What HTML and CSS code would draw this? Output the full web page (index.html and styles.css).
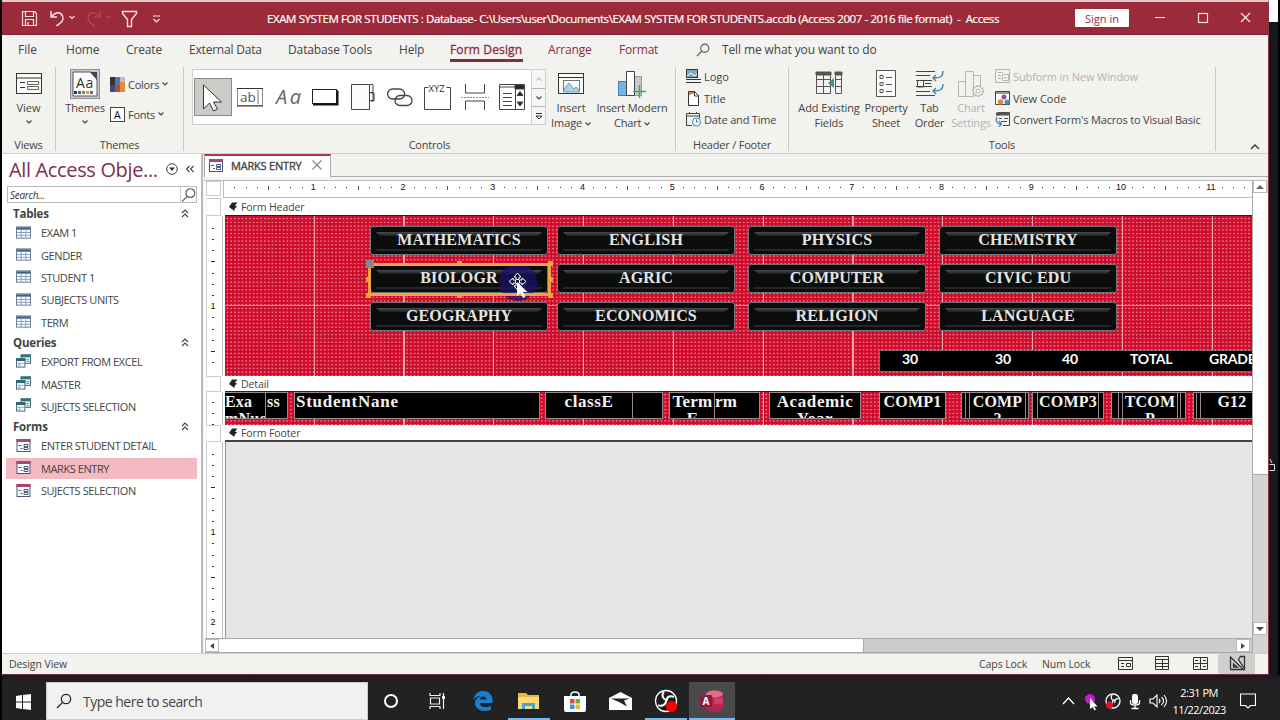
FILE: index.html
```html
<!DOCTYPE html>
<html lang="en">
<head>
    <meta charset="UTF-8">
    <title>EXAM SYSTEM FOR STUDENTS - Access</title>
    <link rel="stylesheet" href="styles.css">
</head>
<body>
<!-- shared icons -->
<svg class="defs">
    <symbol id="i-table" viewBox="0 0 16 13"><rect x=".5" y=".5" width="15" height="12" fill="#fff" stroke="#5f7893"/><path d="M1 1h14v2.5H1z" fill="#3f5f86"/><path d="M5.5 3v10M10.500 3v10M1 6.500h14M1 9.500h14" stroke="#7f9dbb" fill="none"/></symbol>
    <symbol id="i-query" viewBox="0 0 16 15"><rect x="5.500" y=".5" width="10" height="9" fill="#e9f2f5" stroke="#44686e"/><path d="M5 0h11v3H5z" fill="#2f7476"/><rect x=".5" y="4.500" width="9" height="9" fill="#f2f7fa" stroke="#44647a"/><path d="M0 4h10v3H0z" fill="#2d6673"/><path d="M2 9.500h3M6 9.500h2M2 11.500h3M11 5.500h3M11 7.500h3" stroke="#6f92a8"/></symbol>
    <symbol id="i-form" viewBox="0 0 14 13"><rect x=".5" y=".5" width="13" height="12" fill="#fff" stroke="#4c567c"/><path d="M0 0h14v3H0z" fill="#a8476f"/><path d="M2 6.500h3M4 9.500h2M7.500 5.500h4v2h-4zM7.500 8.500h4v2h-4z" stroke="#4a5a8b" fill="none"/></symbol>
    <symbol id="i-up2" viewBox="0 0 8 9"><path d="M1 4l3-3 3 3M1 8l3-3 3 3" stroke="#444" fill="none" stroke-width="1.100"/></symbol>
    <symbol id="i-down" viewBox="0 0 6 4"><path d="M.5.5L3 3 5.500.5" stroke="currentColor" fill="none" stroke-width="1.100"/></symbol>
    <symbol id="i-search" viewBox="0 0 16 16"><circle cx="10" cy="6" r="4.700" fill="none" stroke="currentColor" stroke-width="1.200"/><path d="M6.600 9.400L1 15" stroke="currentColor" stroke-width="1.300"/></symbol>
    <symbol id="i-arrow" viewBox="0 0 9 9"><path d="M3 .5h5.500L6 3.500 8.500 5C6.500 5 5.500 6 5.500 9L0 5z" fill="#222"/></symbol>
</svg>

<div class="screen">
    <div class="window">
        <header class="titlebar">
            <div class="quick">
                <svg width="140" height="24" viewBox="0 0 140 24" fill="none" stroke="#ffdfe4" stroke-width="1.200">
                    <path d="M1.500 5.500h12l2 2v12h-14zM4.500 5.500v5h8v-5M4.500 19.500v-6h8v6M7 16v3"/>
                    <path d="M30 5v6h6M30.500 11c3-5 9-6 11-1s-2 7-6 10" stroke-width="1.500"/>
                    <path d="M48.500 10l2.500 2.500 2.500-2.500"/>
                    <path d="M79 5v6h-6M78.500 11c-3-5-9-6-11-1s2 7 6 10M85.500 10l2 2 2-2" stroke="#b4505d"/>
                    <path d="M101.500 5.500h14v2l-5 6v7h-4v-7l-5-6z" stroke-width="1.400"/>
                    <path d="M132 10h7M132.500 13l3 3 3-3"/>
                </svg>
            </div>
            <div class="title">EXAM SYSTEM FOR STUDENTS : Database- C:\Users\user\Documents\EXAM SYSTEM FOR STUDENTS.accdb (Access 2007 - 2016 file format)&nbsp; -&nbsp; Access</div>
            <button class="signin">Sign in</button>
            <svg class="winbtns" width="110" height="12" viewBox="0 0 110 12" stroke="#ffe6ea" fill="none" stroke-width="1.200"><path d="M6 5.500h10M92 1l9 9M101 1l-9 9"/><rect x="49.500" y="1.500" width="9" height="9"/></svg>
        </header>

        <nav class="tabs">
            <span class="t-file">File</span><span class="t-home">Home</span><span class="t-create">Create</span><span class="t-ext">External Data</span><span class="t-db">Database Tools</span><span class="t-help">Help</span><span class="t-design active">Form Design</span><span class="t-arr red">Arrange</span><span class="t-fmt red">Format</span>
            <svg width="14" height="14" color="#555"><use href="#i-search"/></svg><span class="t-tell">Tell me what you want to do</span>
        </nav>

        <div class="ribbon">
            <section class="group g-views">
                <div class="body">
                    <div class="big">
                        <svg width="28" height="30" viewBox="0 0 28 30" fill="none" stroke="#333"><rect x="1.500" y="4.500" width="25" height="20" fill="#fbfbf9"/><path d="M1 9h26M5 13.500h5M5 18.500h5"/><path d="M12.500 12.500h11v3h-11zM12.500 17.500h11v3h-11z" stroke="#666"/></svg>
                        <span>View</span><svg class="chev" width="6" height="4"><use href="#i-down"/></svg>
                    </div>
                </div>
                <h4>Views</h4>
            </section>
            <section class="group g-themes">
                <div class="body">
                    <div class="big">
                        <svg width="30" height="30" viewBox="0 0 30 30"><rect x=".5" y=".5" width="29" height="29" fill="#c5cad2" stroke="#8a929e"/><path d="M3 3h18l6 7v17H3z" fill="#fff" stroke="#555"/><path d="M20 3h7v8z" fill="#3c4653"/><text x="6" y="19" font-size="14" font-family="Open Sans" fill="#333" textLength="17">Aa</text><path d="M4 23.500h3" stroke="#333" stroke-width="3"/><path d="M8 23.500h3" stroke="#47648a" stroke-width="3"/><path d="M12 23.500h3" stroke="#62975a" stroke-width="3"/><path d="M16 23.500h3" stroke="#d1a23b" stroke-width="3"/><path d="M20 23.500h3" stroke="#705c95" stroke-width="3"/></svg>
                        <span>Themes</span><svg class="chev" width="6" height="4"><use href="#i-down"/></svg>
                    </div>
                    <div class="stack">
                        <div><svg width="15" height="15"><path d="M0 0h5v8H0z" fill="#333"/><path d="M5 0h5v8H5z" fill="#5677a5"/><path d="M10 0h5v5h-5z" fill="#b4c0ca"/><path d="M0 8h5v7H0z" fill="#344f87"/><path d="M5 8h5v7H5z" fill="#b84d26"/><path d="M10 5h5v10h-5z" fill="#e48a42"/></svg><span class="lbl-colors">Colors</span> <svg class="chev" width="6" height="4"><use href="#i-down"/></svg></div>
                        <div><svg width="15" height="15"><rect x=".5" y=".5" width="14" height="14" fill="#fff" stroke="#444"/><text x="4" y="11.500" font-family="Open Sans" font-size="10.500">A</text></svg><span class="lbl-fonts">Fonts</span> <svg class="chev" width="6" height="4"><use href="#i-down"/></svg></div>
                    </div>
                </div>
                <h4>Themes</h4>
            </section>
            <section class="group g-controls">
                <div class="body">
                    <div class="gallery">
                        <div class="tools">
                            <div class="tool picked"><svg width="37" height="37" viewBox="0 0 37 37"><path d="M8.500 6v24l6-6 4 8 4-2-4-7h8z" fill="#fff" stroke="#333"/></svg></div>
                            <svg width="298" height="30" viewBox="3 0 298 30" fill="none" stroke="#444">
                                <rect x="4.500" y="6.500" width="25" height="17" stroke="#888"/><path d="M4 24h26M4 6.500h26" stroke="#333"/><text x="7" y="20" font-family="Open Sans" font-size="13.500" fill="#555" stroke="none">ab</text><path d="M25 8v14" stroke="#777"/>
                                <text x="43" y="22" font-family="Open Sans" font-style="italic" font-size="20" fill="#666" stroke="none" textLength="25">Aa</text>
                                <rect x="79.500" y="7.500" width="24" height="14" stroke="#222"/><path d="M80 22.500h24.500v-14" stroke="#111" stroke-width="2"/>
                                <path d="M118.500 2.500h18v25h-18zM137 2.500h3v8h-3M140 10.500v8h-3" fill="#fbfbfb"/><path d="M138 11h3v8h-3" stroke="#333"/>
                                <rect x="154.600" y="7" width="17" height="10" rx="5" stroke-width="1.300"/><rect x="162" y="13.500" width="17" height="10" rx="5" stroke-width="1.300"/>
                                <path d="M191.500 5.500v22h26v-22M191.500 5.500h4M213.500 5.500h4"/><text x="195.500" y="10" font-family="Open Sans" font-size="9.500" fill="#333" stroke="none">XYZ</text>
                                <path d="M232.500 2v9h19v-9M232.500 28v-9h19v9"/><path d="M228 15.500h28" stroke="#5d9bb0" stroke-dasharray="2 1"/>
                                <path d="M266.500 2.500h25v25h-25z"/><path d="M266 5h17M270 11.500h9M270 15.500h9M270 19.500h9M270 23.500h9M282.500 3v25" /><path d="M282 3h9v4h-9zM284 13.500l3-4 3 4zM284 20l3 4 3-4z" fill="#222"/>
                            </svg>
                        </div>
                        <div class="spin"><i><svg width="6" height="4" color="#bbb" class="flip"><use href="#i-down"/></svg></i><i><svg width="6" height="4"><use href="#i-down"/></svg></i><i><svg width="8" height="8" viewBox="0 0 8 8" fill="none" stroke="#333"><path d="M1 1.500h6M1 4l3 3 3-3z"/></svg></i></div>
                    </div>
                    <div class="big img">
                        <svg width="28" height="30" viewBox="0 0 28 30" fill="none" stroke="#333"><rect x="1.500" y="4.500" width="25" height="20" fill="#fbfbf9"/><path d="M1 8.500h26"/><rect x="6.500" y="11.500" width="16" height="11" stroke="#777"/><path d="M7 20l5-6 5 6 2-2 3 3v2H7z" fill="#acd0e3" stroke="#6c9eb8"/></svg>
                        <span>Insert<br>Image <svg class="chev" width="6" height="4"><use href="#i-down"/></svg></span>
                    </div>
                    <div class="big chart">
                        <svg width="32" height="30" viewBox="1 0 32 30" fill="none" stroke="#444"><rect x="3.500" y="12.500" width="8" height="14" fill="#76b4df" stroke="#3c7fb0"/><path d="M19.500 7.500h7v19h-7z" fill="#c9c9c9" stroke="#999"/><path d="M11.500 2.500h8v24h-8z" fill="#fff"/><path d="M24.500 16v13M18 22.500h13" stroke="#45a557" stroke-width="1.500"/></svg>
                        <span>Insert Modern<br>Chart <svg class="chev" width="6" height="4"><use href="#i-down"/></svg></span>
                    </div>
                </div>
                <h4>Controls</h4>
            </section>
            <section class="group g-hf">
                <div class="body">
                    <div class="stack three">
                        <div><svg width="15" height="15" fill="none"><rect x=".5" y=".5" width="11" height="8" fill="#7fa9c0" stroke="#333"/><path d="M1 7l4-3 3 3 3-2" stroke="#fff"/><path d="M0 10.500h15M0 13.500h15" stroke="#333"/></svg>Logo</div>
                        <div><svg width="15" height="15" fill="none"><path d="M2.500.5h6l4 4v10h-10z" fill="#fff" stroke="#333"/><path d="M8.500 1v4h4" stroke="#333"/><path d="M4 1v3M4 2h4" stroke="#d98b3f" stroke-width="2"/></svg>Title</div>
                        <div class="date"><svg width="15" height="15" fill="none"><path d="M13.500 6V1.500h-13v12H6M0 4h14M3.500 0v2M10.500 0v2" stroke="#444"/><circle cx="10.500" cy="10" r="4" fill="#fff" stroke="#3b83ac"/><path d="M10.500 7.500V10h2" stroke="#3b83ac"/></svg>Date and Time</div>
                    </div>
                </div>
                <h4>Header / Footer</h4>
            </section>
            <section class="group g-tools">
                <div class="body">
                    <div class="big w68"><svg width="28" height="30" viewBox="0 0 28 30" fill="none" stroke="#555"><path d="M1.500 3.500h14v21h-14zM1.500 10.500h14M1.500 17.500h14M8.500 4v21M20.500 3.500h6v21h-6zM20 10.500h7M20 17.500h7"/><path d="M1 3h15v3H1zM20 3h7v3h-7z" fill="#555"/><path d="M19 9v10l-6-5z" fill="#4f8694" stroke="none"/></svg><span>Add Existing<br>Fields</span></div>
                    <div class="big w46"><svg width="22" height="30" viewBox="0 0 22 30" fill="none" stroke="#555"><path d="M1.500 1.500h19v26h-19z" fill="#fdfdfb"/><path d="M5 6.500h3v3H5zM5 13.500h3v3H5zM5 20.500h3v3H5zM11 8.500h6M11 15.500h6M11 22.500h6"/></svg><span>Property<br>Sheet</span></div>
                    <div class="big w41"><svg width="28" height="30" viewBox="0 0 28 30" fill="none" stroke="#444"><path d="M0 2.500h19M0 6.500h14M0 11.500h16M0 17.500h16M0 22.500h14M0 26.500h19M1.500 11v7h6v-7M9 14.500h6"/><path d="M27 2c0 6-3 7-10 7M20 6l-3 3 3 3M27 15c0 6-3 7-10 7M20 19l-3 3 3 3" stroke="#3c84ad" stroke-width="1.300"/></svg><span>Tab<br>Order</span></div>
                    <div class="big w39 off"><svg width="28" height="30" viewBox="0 0 28 30" fill="none" stroke="#b5b5b2"><path d="M1.500 12.500h7v15h-7zM8.500 2.500h8v25h-8zM16.500 6.500h7v11"/><circle cx="21" cy="22" r="5" fill="#f2f2ee" stroke-width="2" stroke-dasharray="2 1"/><circle cx="21" cy="22" r="2"/></svg><span>Chart<br>Settings</span></div>
                    <div class="stack three last">
                        <div class="off"><svg width="15" height="15" fill="none" stroke="#b5b5b2"><path d="M.5.5h14v13H.5zM3 3.500h5M3 6.500h3M3 9.500h3M7.500 5.500h6v6h-6zM9 8.500h3"/></svg>Subform in New Window</div>
                        <div><svg width="15" height="15" fill="none"><path d="M.5.5h14v13H.5z" fill="#fff" stroke="#444"/><path d="M0 2h15" stroke="#333"/><circle cx="9" cy="6" r="2.500" fill="#8a4c9f"/><circle cx="5.500" cy="11" r="2.800" fill="#e0893b"/><circle cx="12" cy="11" r="2.600" fill="#4b91c3"/></svg>View Code</div>
                        <div class="convert"><svg width="15" height="15" fill="none"><path d="M3 4V.5h11.500v13H8" stroke="#444"/><path d="M1 2h14" stroke="#555" stroke-width="3"/><path d="M4 6.500h3M9 6.500h4M6 9.500h6" stroke="#555"/><path d="M2 5c-2 4 0 7 4 7M4 9l2.500 3L4 15" stroke="#3e82b8" stroke-width="1.300"/></svg>Convert Form's Macros to Visual Basic</div>
                    </div>
                </div>
                <h4>Tools</h4>
            </section>
            <svg class="collapse" width="10" height="6" fill="none" stroke="#333" stroke-width="1.300"><path d="M1 5l4-4 4 4"/></svg>
        </div>

        <main class="work">
            <aside class="navpane">
                <div class="navhead">
                    <h2>All Access Obje...</h2>
                    <svg width="12" height="12" viewBox="0 0 12 12"><circle cx="6" cy="6" r="5.300" fill="#fff" stroke="#444"/><path d="M3 4.500h6L6 8z" fill="#333"/></svg>
                    <svg width="8" height="8" viewBox="0 0 8 8" fill="none" stroke="#444" stroke-width="1.100"><path d="M3.500 1l-3 3 3 3M7.500 1l-3 3 3 3"/></svg>
                </div>
                <div class="navsearch"><em>Search...</em><svg width="16" height="16" color="#555"><use href="#i-search"/></svg></div>
                <h3>Tables <svg width="8" height="9"><use href="#i-up2"/></svg></h3>
                <ul>
                    <li><svg width="15" height="13"><use href="#i-table"/></svg>EXAM 1</li>
                    <li><svg width="15" height="13"><use href="#i-table"/></svg>GENDER</li>
                    <li><svg width="15" height="13"><use href="#i-table"/></svg>STUDENT 1</li>
                    <li><svg width="15" height="13"><use href="#i-table"/></svg>SUBJECTS UNITS</li>
                    <li><svg width="15" height="13"><use href="#i-table"/></svg>TERM</li>
                </ul>
                <h3>Queries <svg width="8" height="9"><use href="#i-up2"/></svg></h3>
                <ul>
                    <li><svg width="15" height="15"><use href="#i-query"/></svg>EXPORT FROM EXCEL</li>
                    <li><svg width="15" height="15"><use href="#i-query"/></svg>MASTER</li>
                    <li><svg width="15" height="15"><use href="#i-query"/></svg>SUJECTS SELECTION</li>
                </ul>
                <h3>Forms <svg width="8" height="9"><use href="#i-up2"/></svg></h3>
                <ul>
                    <li><svg width="15" height="13"><use href="#i-form"/></svg>ENTER STUDENT DETAIL</li>
                    <li class="current"><svg width="15" height="13"><use href="#i-form"/></svg>MARKS ENTRY</li>
                    <li><svg width="15" height="13"><use href="#i-form"/></svg>SUJECTS SELECTION</li>
                </ul>
            </aside>

            <section class="document">
                <div class="doctabs">
                    <div class="doctab"><svg width="14" height="13"><use href="#i-form"/></svg><b>MARKS ENTRY</b><svg width="10" height="10" stroke="#888" stroke-width="1.200"><path d="M.5.5l9 9M9.500.5l-9 9"/></svg></div>
                </div>
                <div class="designer">
                    <div class="canvas">
                        <div class="hrule"><div class="corner"></div><div class="marks" data-count="91"></div></div>

                        <div class="bar b-header"><i></i><span><svg width="9" height="9"><use href="#i-arrow"/></svg>Form Header</span></div>
                        <div class="sect s-header">
                            <div class="vrule" data-count="13"></div>
                            <div class="grid">
                                <div class="inch"></div>
                                <div class="btn c1 r1">MATHEMATICS</div><div class="btn c2 r1">ENGLISH</div><div class="btn c3 r1">PHYSICS</div><div class="btn c4 r1">CHEMISTRY</div>
                                <div class="btn c1 r2">BIOLOGR</div><div class="btn c2 r2">AGRIC</div><div class="btn c3 r2">COMPUTER</div><div class="btn c4 r2">CIVIC EDU</div>
                                <div class="btn c1 r3">GEOGRAPHY</div><div class="btn c2 r3">ECONOMICS</div><div class="btn c3 r3">RELIGION</div><div class="btn c4 r3">LANGUAGE</div>
                                <div class="spot"></div>
                                <div class="selection"><i class="move"></i><i class="n"></i><i class="ne"></i><i class="w"></i><i class="e"></i><i class="sw"></i><i class="s"></i><i class="se"></i></div>
                                <svg class="pointer" width="22" height="28" viewBox="0 0 22 28"><path d="M9.500 1L13 5h-2v2.500h-3V5H6zM1 9.500L5 6v2h2.500v3H5v2zM18 9.500L14 6v2h-2.500v3H14v2zM9.500 18L6 14h2v-2.500h3V14h2z" fill="#0b0b35" stroke="#fff"/><path d="M9 10v14l3.500-3 2.500 5 2.500-1-2.500-5h4.500z" fill="#fff"/></svg>
                                <div class="totals"><span>30</span><span>30</span><span>40</span><span>TOTAL</span><span>GRADE</span></div>
                            </div>
                        </div>

                        <div class="bar b-detail"><i></i><span><svg width="9" height="9"><use href="#i-arrow"/></svg>Detail</span></div>
                        <div class="sect s-detail">
                            <div class="vrule" data-count="3"></div>
                            <div class="grid">
                                <div class="inch"></div>
                                <div class="field f-exam">Exa<br>mNuo</div><div class="field f-ss">ss</div>
                                <div class="field f-name">StudentNane</div>
                                <div class="field f-class">classE</div><div class="field f-class2"></div>
                                <div class="field f-term">Term<br>E</div><div class="field f-term2">rm</div>
                                <div class="field f-year">Academic<br>Year</div>
                                <div class="field f-c1">COMP1</div>
                                <div class="field f-c2a"></div><div class="field f-c2b"></div><div class="field f-c2">COMP<br>2</div>
                                <div class="field f-c3a"></div><div class="field f-c3">COMP3</div>
                                <div class="field f-ta"></div><div class="field f-tb"></div><div class="field f-t">TCOM<br>P</div>
                                <div class="field f-ga"></div><div class="field f-gb"></div><div class="field f-g">G12</div>
                            </div>
                        </div>

                        <div class="bar b-footer"><i></i><span><svg width="9" height="9"><use href="#i-arrow"/></svg>Form Footer</span></div>
                        <div class="sect s-empty"><div class="vrule" data-count="17"></div><div class="blank"></div></div>
                        <div class="hscroll"><i class="box left"></i><div class="thumb"></div><i class="box right"></i></div>
                    </div>
                    <div class="vscroll"><i class="box up"></i><div class="thumb"></div><i class="box down"></i></div>
                </div>
            </section>
        </main>

        <footer class="status">
            <span class="mode">Design View</span><span class="caps">Caps Lock</span><span class="num">Num Lock</span>
            <svg width="137" height="20" viewBox="0 0 137 20" fill="none" stroke="#333"><path d="M100 0h37v20h-37z" fill="#cfcfcd" stroke="none"/><path d="M.5 3.500h14v12H.5zM0 6.500h15M3 9.500h3M3 12.500h3M8.500 9.500h4v3h-4z"/><path d="M37.500 2.500h13v13h-13zM37 5.500h14M37 9.500h14M37 12.500h14M44.500 6v9"/><path d="M75.500 3.500h14v12h-14zM75 9.500h15M82.500 3v13M85 6.500h3M85 12.500h3M77 6.500h3M77 12.500h3"/><path d="M112.500 3v12.500h13zM126.500 2.500h-4l-2 3 6 9zM115.500 10v3h4z" stroke-width="1.300"/></svg>
        </footer>
    </div>
    <div class="behind"><svg width="7" height="14" fill="none" stroke="#ddd"><path d="M1 1l2 4M.5 6.500h5v6h-5"/></svg></div>

    <div class="taskbar">
        <div class="start"><svg width="16" height="16" fill="#fff"><path d="M0 2l6-1v6.500H0zM7 1l8-1v7.500H7zM0 8.500h6V15l-6-1zM7 8.500h8V16l-8-1z"/></svg></div>
        <div class="search"><svg width="16" height="16" color="#222"><use href="#i-search"/></svg>Type here to search</div>
        <div class="apps">
            <div><svg width="16" height="16"><circle cx="8" cy="8" r="6" fill="none" stroke="#fff" stroke-width="2"/></svg></div>
            <div><svg width="16" height="16" fill="none" stroke="#eee" stroke-width="1.200"><path d="M1 0v2.500h10V0M1.500 5h9v6h-9zM1 16v-2.500h10V16M14.500 0v16"/><path d="M13 4.500h3" stroke-width="3"/></svg></div>
            <div><svg width="20" height="20" viewBox="0 0 20 20"><path d="M0 9C2 2 6 0 10 0c6 0 9.500 4 9.500 9v3H7c0 5 7 5 11 2.500v4C11 22 2 19 2 12 2 8 5 6 8 5 4 5 2 7 0 9zM7 8.500h6.500C13.500 4.500 7.500 4.500 7 8.500z" fill="#1a7fd0"/></svg></div>
            <div class="run"><svg width="21" height="18"><path d="M0 1h8l2 2h11v14H0z" fill="#e9b83b"/><path d="M0 5h21v12H0z" fill="#fadb78"/><path d="M4 17v-6h13v6h-3v-3H7v3z" fill="#4ba3cf"/></svg></div>
            <div><svg width="22" height="21"><path d="M7 6V4c0-4 8-4 8 0v2" stroke="#fff" stroke-width="1.500" fill="none"/><path d="M0 5h22v14q0 2-2 2H2q-2 0-2-2z" fill="#fff"/><path d="M6 8h4.500v4.500H6z" fill="#e04a32"/><path d="M11.500 8H16v4.500h-4.500z" fill="#6fab3a"/><path d="M6 13.500h4.500V18H6z" fill="#2d9ad8"/><path d="M11.500 13.500H16V18h-4.500z" fill="#f0b92e"/></svg></div>
            <div><svg width="23" height="18"><path d="M0 6L11.500 0 23 6v12H0z" fill="#fff"/><path d="M2 6.500h19l-6 2 3 6-7-4z" fill="#222"/></svg></div>
            <div class="run"><svg width="24" height="24" viewBox="0 0 24 24"><circle cx="12" cy="12" r="10.500" fill="#1b1b1b" stroke="#fff" stroke-width="1.300"/><path d="M10 3c-3 3-1 7 2 8M20 8c-4-2-8 0-7 4M4 16c3 2 8 0 8-4" fill="none" stroke="#fff" stroke-width="2"/><circle cx="17.500" cy="17.500" r="5.500" fill="#f00"/></svg></div>
            <div class="run on"><svg width="24" height="22" viewBox="0 0 24 22"><path d="M6 4v14c0 5 17 5 17 0V4z" fill="#b3274b"/><ellipse cx="14.500" cy="4" rx="8.500" ry="3.500" fill="#e66c8c"/><path d="M14 8h9v6h-9z" fill="#d14067"/><rect y="5" width="12" height="12" rx="1" fill="#8d1c37"/><text x="2.500" y="15" font-family="Open Sans" font-weight="700" font-size="10" fill="#fff">A</text></svg></div>
        </div>
        <div class="tray">
            <svg width="110" height="20" viewBox="0 0 110 20" fill="none" stroke="#fff" stroke-width="1.300"><path d="M1 13l5.500-6 5.500 6"/><circle cx="28" cy="8" r="4.500" fill="#c31fd1" stroke="#c31fd1" stroke-dasharray="2 1"/><path d="M28 7v11l2.500-2 2 3.500 1.500-1-2-3h3.500z" fill="#fff" stroke="none"/><circle cx="51" cy="10" r="7" fill="#222"/><path d="M50 4c-2 3 0 6 3 5M57 8c-3-1-5 1-4 4M46 13c2 1 5 0 5-4"/><circle cx="47.500" cy="14" r="3.500" fill="#e3122a" stroke="none"/><rect x="70" y="3" width="6" height="10" rx="2" fill="#fff" stroke="none"/><path d="M68.500 9v3q0 2 4.500 2t4.500-2V9M73 14v3.500M69.500 17.500h7"/><path d="M88 8h3l4-4v12l-4-4h-3zM97 8q2 2 0 4M99.500 6q4 4 0 8M102 4q5 6 0 12" stroke-width="1.100"/></svg>
            <div class="clock">2:31 PM<br>11/22/2023</div>
            <svg width="16" height="16" fill="none" stroke="#fff" stroke-width="1.200"><path d="M.5 1h15v11.500h-5L8 15l-2.500-2.500h-5z"/></svg>
        </div>
    </div>
</div>

<script>
    // ruler marks: a dot every 1/8 inch, a tick at the half, a number at the inch
    function fillRuler(el) {
        var html = '';
        for (var i = 1; i <= Number(el.dataset.count); i++) {
            if (i % 8 === 0) html += '<span>' + i / 8 + '</span>';
            else if (i % 4 === 0) html += '<span><i class="tick"></i></span>';
            else html += '<span><i class="dot"></i></span>';
        }
        el.innerHTML = html;
    }
    document.querySelectorAll('.marks, .vrule').forEach(fillRuler);
</script>
</body>
</html>
```
FILE: styles.css
```css
* {
    box-sizing: border-box;
}

body {
    margin: 0;
    background: #111;
    font-family: "Open Sans", sans-serif;
    font-size: 11px;
    color: #444;
    overflow: hidden;
}

h2, h3, h4, ul {
    margin: 0;
    padding: 0;
    list-style: none;
    font-weight: normal;
}

svg {
    flex: none;
    display: block;
}

.defs {
    display: none;
}

.screen {
    width: 1280px;
    height: 720px;
    display: grid;
    grid-template-columns: 1269px 11px;
    grid-template-rows: 675px 45px;
    background: #000;
}

.window {
    margin-left: 2px;
    border-top: 2px solid #dfc9cc;
    border-right: 1px solid #8a3446;
    border-bottom: 1px solid #6e2c45;
    background: #f2f2ee;
    display: flex;
    flex-direction: column;
}

.behind {
    background: linear-gradient(#fff 22px, #17181f 22px);
    border-right: 2px solid #000;
    padding-top: 458px;
}

/* title bar */
.titlebar {
    height: 33px;
    flex: none;
    background: #9b2a3a;
    border-bottom: 1px solid #7c2437;
    color: #fff;
    display: flex;
    align-items: center;
}

.quick {
    width: 265px;
    padding-left: 19px;
}

.title {
    width: 808px;
    font-size: 11.5px;
    letter-spacing: -0.4px;
    white-space: nowrap;
    -webkit-text-stroke: 0.2px;
}

.signin {
    width: 54px;
    height: 18px;
    padding: 0;
    border: 0;
    border-radius: 1px;
    background: #fff;
    color: #9b2a3a;
    font: 11px "Open Sans", sans-serif;
}

.winbtns {
    margin-left: 20px;
}

/* ribbon tabs */
.tabs {
    height: 32px;
    flex: none;
    display: flex;
    padding-top: 7px;
    font-size: 12px;
    line-height: 16px;
    white-space: nowrap;
}

.tabs span { flex: none; }
.tabs svg { margin: 1px 12px 0 0; }
.t-file { width: 48px; margin-left: 16px; }
.t-home { width: 60px; }
.t-create { width: 63px; }
.t-ext { width: 99px; }
.t-db { width: 111px; }
.t-help { width: 51px; }
.t-design { width: 73px; margin-right: 25px; }
.t-arr { width: 71px; }
.t-fmt { width: 77px; }
.t-ext { letter-spacing: -0.2px; }
.t-tell, .t-db { letter-spacing: -0.12px; }
.t-home, .t-create, .t-arr { letter-spacing: -0.15px; }
.t-help { letter-spacing: -0.2px; }
.t-fmt { letter-spacing: -0.2px; }

.tabs .red, .tabs .active {
    color: #8c2c42;
}

.tabs .active {
    height: 20px;
    border-bottom: 3px solid #832c40;
    letter-spacing: 0.15px;
    -webkit-text-stroke: 0.3px;
}

/* ribbon */
.ribbon {
    height: 87px;
    flex: none;
    display: flex;
    border-bottom: 1px solid #d2d2cf;
    line-height: 15px;
    white-space: nowrap;
}

.group {
    display: flex;
    flex-direction: column;
    height: 84px;
    border-right: 1px solid #cacac7;
}

.group .body {
    height: 71px;
    display: flex;
    padding-top: 2px;
}

.group h4 {
    text-align: center;
    line-height: 13px;
    font-size: 11px;
    letter-spacing: -0.2px;
}

.g-views { width: 54px; }
.g-themes { width: 128px; }
.g-controls { width: 492px; }
.g-hf { width: 113px; }
.g-tools { width: 427px; }

.big {
    display: flex;
    flex-direction: column;
    align-items: center;
    text-align: center;
    font-size: 11px;
}

.big span {
    margin-top: 1px;
}

.chev {
    display: inline-block;
    vertical-align: middle;
}

.big > .chev { margin-top: 5px; }
.g-views .big { width: 53px; }
.g-themes .big { width: 54px; margin-left: 2px; letter-spacing: -0.2px; }
.off { color: #b3b3b0; }
.img { width: 50px; letter-spacing: -0.1px; }
.chart { width: 72px; letter-spacing: -0.15px; }
.w68 { width: 80px; letter-spacing: -0.1px; }
.w46 { width: 34px; letter-spacing: -0.2px; }
.w41 { width: 53px; letter-spacing: -0.2px; }
.w39 { width: 30px; letter-spacing: -0.15px; }

.stack div {
    height: 30px;
    display: flex;
    align-items: center;
    gap: 3px;
}

.g-themes .stack { margin-left: -2px; }

.stack.three {
    padding-left: 10px;
    margin-top: -3px;
}

.stack.three.last { padding-left: 9px; }

.stack.three div {
    height: 21.500px;
    gap: 3px;
}

.lbl-colors, .lbl-fonts { letter-spacing: -0.25px; }
.date, .convert { letter-spacing: -0.18px; }
.last .off { letter-spacing: -0.1px; }

.gallery {
    width: 354px;
    height: 56px;
    margin-left: 8px;
    border: 1px solid #cfcfcd;
    background: #fff;
    display: flex;
    justify-content: space-between;
}

.tools {
    flex: none;
    display: flex;
    align-items: center;
    gap: 4px;
}

.picked {
    width: 38px;
    height: 38px;
    border: 1px solid #888;
    background: #cbcbc8;
    margin-left: 1px;
}

.spin {
    flex: none;
    width: 14px;
    margin-left: -3px;
    background: #f6f6f4;
    border-left: 1px solid #cfcfcd;
}

.spin i {
    height: 18px;
    display: flex;
    align-items: center;
    justify-content: center;
}

.spin i + i { border-top: 1px solid #b5b5b2; }
.flip { transform: scaleY(-1); }

.collapse {
    margin: 77px 0 0 34px;
}

/* navigation pane */
.work {
    flex: 1;
    min-height: 0;
    display: flex;
}

.navpane {
    width: 201px;
    background: #fff;
    border-right: 2px solid #bbb;
}

.navhead {
    height: 31px;
    display: flex;
    align-items: center;
    padding-left: 7px;
}

.navhead h2 {
    width: 157px;
    font-size: 20px;
    letter-spacing: -0.35px;
    color: #80304a;
    white-space: nowrap;
}

.navhead svg { margin-top: -2px; }
.navhead svg + svg { margin-left: 8px; }

.navsearch {
    width: 190px;
    height: 17px;
    margin: 1px 0 2px 5px;
    border: 1px solid #bbb;
    display: flex;
    align-items: center;
    justify-content: space-between;
    padding-left: 2px;
    font-size: 10px;
    letter-spacing: -0.3px;
    color: #333;
}

.navsearch svg { border-left: 1px solid #ccc; }

.navpane h3 {
    height: 17px;
    line-height: 17px;
    display: flex;
    align-items: center;
    justify-content: space-between;
    padding: 0 12px 0 11px;
    font-size: 11.5px;
    font-weight: 700;
    letter-spacing: -0.2px;
}

.navpane li {
    height: 22.400px;
    display: flex;
    align-items: center;
    gap: 10px;
    margin: 0 4px;
    padding-left: 10px;
    padding-bottom: 1px;
    font-size: 11px;
    letter-spacing: -0.42px;
    white-space: nowrap;
}

.navpane li svg { margin-top: -1px; }

.navpane .current {
    background: #f3bac1;
    height: 21px;
    margin-top: 0.5px;
    margin-bottom: 0.9px;
}

/* document */
.document {
    flex: 1;
    display: flex;
    flex-direction: column;
    padding-left: 1px;
}

.doctabs {
    height: 23px;
    flex: none;
    border-bottom: 1px solid #aaa;
}

.doctab {
    width: 127px;
    height: 23px;
    background: #fff;
    border-top: 2px solid #b43549;
    border-right: 1px solid #aaa;
    border-left: 1px solid #aaa;
    display: flex;
    align-items: center;
    gap: 8px;
    padding: 0 0 3px 4px;
    font-size: 11px;
    letter-spacing: -0.2px;
    white-space: nowrap;
}

.doctab b {
    font-weight: 400;
    -webkit-text-stroke: 0.35px;
}

.doctab svg:last-child { margin-left: 3px; }

.designer {
    flex: 1;
    min-height: 0;
    display: flex;
    background: #fff;
    border-top: 3px solid #f4f4f2;
}

.canvas {
    width: 1048px;
    overflow: hidden;
    display: flex;
    flex-direction: column;
}

.hrule {
    height: 18px;
    flex: none;
    display: flex;
    border-top: 1px solid #bbb;
}

.corner {
    width: 15px;
    height: 15px;
    margin-left: 2px;
    border: 1px solid #ccc;
    margin-right: 2px;
}

.marks {
    width: 1030px;
    padding-left: 5.200px;
    overflow: hidden;
    display: flex;
    border: solid #bbb;
    border-width: 0 0 1px 1px;
    font: 9px/13px "Liberation Sans", sans-serif;
    color: #111;
}

.marks span {
    flex: 0 0 11.220px;
    height: 13px;
    text-align: center;
    display: flex;
    align-items: center;
    justify-content: center;
}

.dot {
    width: 1px;
    height: 1px;
    background: #333;
}

.vrule .dot { width: 2px; }

.marks .tick {
    width: 1px;
    height: 4px;
    background: #555;
}

.bar {
    flex: none;
    display: flex;
}

.bar > i {
    width: 15px;
    margin: 0 4px 0 2px;
    border: 1px solid #ccc;
    border-left-color: #eee;
}

.bar span {
    flex: 1;
    display: flex;
    align-items: center;
    gap: 3px;
    padding-left: 4px;
    border-bottom: 1px solid #222;
    font-size: 10.500px;
    letter-spacing: -0.1px;
}

.b-header { height: 18px; }
.b-detail { height: 16px; }
.b-footer { height: 17px; }
.b-footer span { border-bottom: 2px solid #444; }

.sect {
    display: flex;
    flex: none;
}

.s-header { height: 160px; }
.s-detail { height: 33px; }
.s-empty { flex: 1; min-height: 0; }

.vrule {
    width: 17px;
    margin: 0 2px 0 2px;
    padding-top: 4.400px;
    border-right: 1px solid #bbb;
    border-left: 1px solid #ccc;
    overflow: hidden;
    font: 9px/11.220px "Liberation Sans", sans-serif;
    color: #111;
}

.s-header .vrule { padding-top: 6.600px; }
.s-empty .vrule { padding-top: 6.500px; }

.vrule span {
    height: 11.220px;
    display: flex;
    align-items: center;
    justify-content: center;
    padding-right: 3px;
}

.vrule .tick {
    width: 4px;
    height: 1px;
    background: #222;
}

.blank {
    flex: 1;
    background: #e5e5e5;
    border-left: 1px solid #999;
}

/* dotted design grid */
.grid {
    flex: 1;
    position: relative;
    overflow: hidden;
    background:
        repeating-linear-gradient(90deg, #cf0d2d 0 1.200px, rgba(207, 13, 45, 0) 2.200px 2.700px, #cf0d2d 3.742px),
        repeating-linear-gradient(180deg, #cf0d2d 0 1.600px, #f48797 2.500px 2.900px, #cf0d2d 3.742px);
}

/* inch lines */
.inch {
    position: absolute;
    inset: 0;
    background:
        repeating-linear-gradient(90deg, transparent 0 88.500px, #f5a3ad 88.500px 89.800px),
        linear-gradient(#e2858f, #e2858f) 0 89px / 100% 1px no-repeat;
}

.btn {
    position: absolute;
    z-index: 0;
    width: 178px;
    height: 29px;
    border: 1px solid #76727a;
    border-radius: 3px;
    background: #0b0c0c;
    color: #e4e4e4;
    font: bold 16px/26px "Liberation Serif", serif;
    letter-spacing: 0.15px;
    text-align: center;
}

.btn::before {
    content: "";
    position: absolute;
    left: 5px;
    right: 5px;
    top: 5px;
    height: 4px;
    background: linear-gradient(#4b4e4e, #1b1e1e);
    clip-path: polygon(0 0, 100% 0, calc(100% - 4px) 100%, 4px 100%);
    z-index: -1;
}

.btn::after {
    content: "";
    position: absolute;
    left: 5px;
    right: 5px;
    bottom: 3px;
    height: 2px;
    background: #222727;
}

.c1 { left: 145px; }
.c2 { left: 332px; }
.c3 { left: 523px; }
.c4 { left: 714px; }
.r1 { top: 10px; }
.r2 { top: 48px; }
.r3 { top: 86px; }

.spot {
    position: absolute;
    left: 274px;
    top: 47px;
    width: 38px;
    height: 38px;
    border-radius: 50%;
    background: rgba(26, 18, 110, 0.72);
}

.selection {
    position: absolute;
    left: 143px;
    top: 47px;
    width: 183px;
    height: 33px;
    border: 3px solid #f2a243;
}

.selection i {
    position: absolute;
    width: 5px;
    height: 5px;
    background: #f2a243;
}

.selection .move { width: 8px; height: 8px; left: -5px; top: -6px; background: #888; }
.n { left: 86px; top: -5px; }
.s { left: 86px; bottom: -5px; }
.ne { right: -5px; top: -5px; }
.se { right: -5px; bottom: -5px; }
.sw { left: -5px; bottom: -5px; }
.w { left: -5px; top: 11px; }
.e { right: -5px; top: 11px; }

.pointer {
    position: absolute;
    left: 283px;
    top: 56px;
}

.totals {
    position: absolute;
    left: 654px;
    top: 134px;
    width: 380px;
    height: 22px;
    border: 1px solid #8a6068;
    background: #000;
    color: #fff;
    font: bold 14px/16px Lato, sans-serif;
    letter-spacing: -0.2px;
    display: flex;
    padding-left: 22px;
    white-space: nowrap;
}

.totals span { flex: none; }
.totals span:nth-child(1) { width: 93px; }
.totals span:nth-child(2) { width: 67px; }
.totals span:nth-child(3) { width: 68px; }
.totals span:nth-child(4) { width: 79px; }

.field {
    position: absolute;
    top: 0;
    height: 27px;
    overflow: hidden;
    border: 1px solid #9a8a8d;
    background: #000;
    color: #f2f2f2;
    font: bold 16px/17px "Liberation Serif", serif;
    letter-spacing: 0.2px;
    text-align: center;
}

.f-exam { left: 0; width: 41px; border-left: 0; text-align: left; }
.f-ss { left: 40px; width: 23px; text-align: left; padding-left: 1px; }
.f-name { left: 69px; width: 246px; text-align: left; padding-left: 1px; font-size: 17px; letter-spacing: 0.75px; }
.f-class { left: 320px; width: 88px; font-size: 17px; letter-spacing: 0.6px; }
.f-class2 { left: 407px; width: 31px; }
.f-term { left: 444px; width: 47px; font-size: 17px; }
.f-term2 { left: 489px; width: 46px; text-align: left; font-size: 17px; }
.f-year { left: 544px; width: 92px; font-size: 17px; letter-spacing: 0.6px; }
.f-c1 { left: 654px; width: 67px; }
.f-c2a { left: 736px; width: 68px; }
.f-c2b { left: 740px; width: 60px; }
.f-c2 { left: 744px; width: 57px; }
.f-c3a { left: 807px; width: 72px; }
.f-c3 { left: 812px; width: 62px; }
.f-ta { left: 886px; width: 75px; }
.f-tb { left: 893px; width: 63px; }
.f-t { left: 897px; width: 56px; }
.f-ga { left: 968px; width: 70px; }
.f-gb { left: 971px; width: 70px; }
.f-g { left: 975px; width: 64px; }

/* scroll bars */
.hscroll {
    height: 15px;
    flex: none;
    display: flex;
    margin-left: 1px;
    background: #cdcdcd;
    border: solid #aaa;
    border-width: 1px 0;
}

.hscroll .thumb {
    width: 645px;
    background: #fff;
    border-right: 1px solid #aaa;
    margin-right: 372px;
}

.box {
    width: 14px;
    height: 13px;
    flex: none;
    border: 1px solid #bbb;
    background: #fff;
    display: flex;
    align-items: center;
    justify-content: center;
}

.box::before {
    content: "";
    border: 3px solid transparent;
}

.left::before { border-right: 4px solid #444; border-left: 0; }
.right::before { border-left: 4px solid #444; border-right: 0; }
.up::before { border-bottom: 4px solid #666; border-top: 0; border-inline-width: 4px; }
.down::before { border-top: 4px solid #444; border-bottom: 0; border-inline-width: 4px; }

.vscroll {
    width: 16px;
    background: #d3d3d3;
    display: flex;
    flex-direction: column;
    border-left: 1px solid #aaa;
    padding-bottom: 18px;
}

.vscroll .thumb {
    height: 282px;
    background: #fff;
    border-bottom: 1px solid #aaa;
    margin-bottom: auto;
}

/* status bar */
.status {
    height: 21px;
    flex: none;
    border-top: 1px solid #ccc;
    display: flex;
    align-items: center;
    font-size: 10.500px;
    letter-spacing: -0.08px;
}

.mode { width: 970px; padding-left: 7px; }
.caps { width: 70px; padding-left: 7px; }
.num { width: 76px; }
.mode, .caps, .num { padding-bottom: 1px; }

/* taskbar */
.taskbar {
    grid-column: 1 / 3;
    margin-left: 2px;
    background: linear-gradient(#1c1722, #222 8px);
    display: flex;
    color: #fff;
}

.start {
    width: 44px;
    padding: 19px 0 0 14px;
}

.search {
    width: 322px;
    margin-top: 7px;
    background: #f1f1f1;
    border: 1px solid #ccc;
    color: #444;
    font-size: 14px;
    letter-spacing: -0.5px;
    display: flex;
    align-items: center;
    gap: 11px;
    padding-left: 9px;
}

.apps {
    display: flex;
    margin-top: 7px;
}

.apps div {
    width: 45.9px;
    display: flex;
    align-items: center;
    justify-content: center;
    padding-top: 2px;
    border-bottom: 2px solid transparent;
}

.apps .run { border-image: linear-gradient(90deg, transparent 4px, #76b9ed 4px 42px, transparent 42px) 2; }
.apps .on { background: #4a4a4a; border-bottom: 2px solid #76b9ed; border-image: none; }

.tray {
    margin-left: 327px;
    margin-top: 7px;
    display: flex;
    align-items: center;
}

.clock {
    width: 54px;
    font-size: 11px;
    line-height: 17px;
    letter-spacing: -0.5px;
    text-align: center;
    white-space: nowrap;
    margin: -1px 14px 0 0;
}
```
